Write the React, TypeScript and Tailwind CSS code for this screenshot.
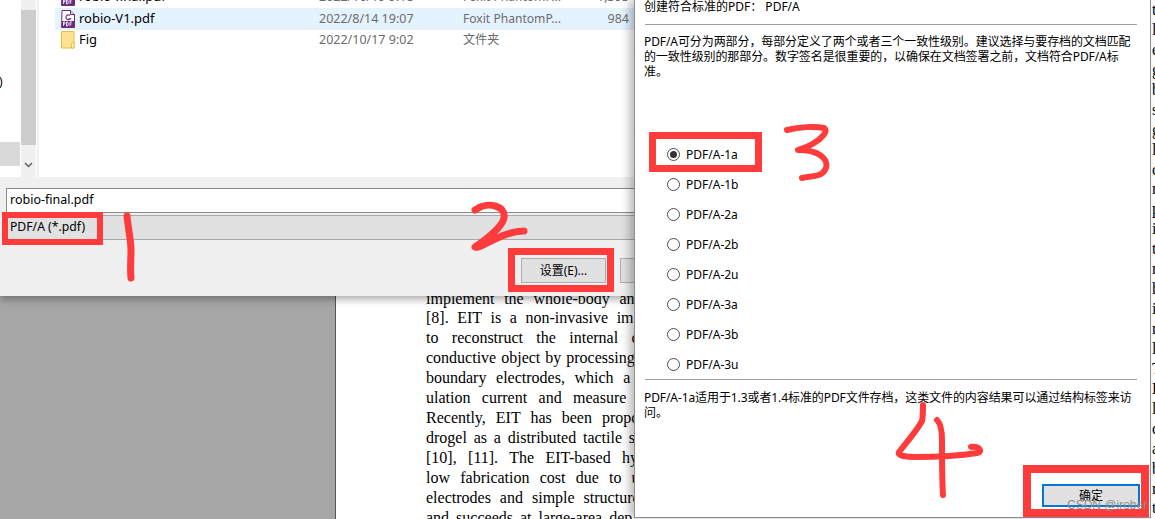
const uiFont = "font-['Noto_Sans','Noto_Sans_CJK_SC',sans-serif]";

const pageLines = [
  { text: "implement the whole-body an", spacing: "[word-spacing:5.7px]" },
  { text: "[8]. EIT is a non-invasive im", spacing: "[word-spacing:4.6px]" },
  { text: "to reconstruct the internal co", spacing: "[word-spacing:9.4px]" },
  { text: "conductive object by processing", spacing: "[word-spacing:1px]" },
  { text: "boundary electrodes, which a", spacing: "[word-spacing:5.6px]" },
  { text: "ulation current and measure", spacing: "[word-spacing:7.4px]" },
  { text: "Recently, EIT has been propo", spacing: "[word-spacing:6px]" },
  { text: "drogel as a distributed tactile s", spacing: "[word-spacing:2.8px]" },
  { text: "[10], [11]. The EIT-based hy", spacing: "[word-spacing:7.4px]" },
  { text: "low fabrication cost due to us", spacing: "[word-spacing:6.2px]" },
  { text: "electrodes and simple structure", spacing: "[word-spacing:5px]" },
  { text: "and succeeds at large-area dep", spacing: "[word-spacing:3px]" },
];

const edgeLetters = ["t", "l", "e", "g", "b", "s", "g", "l", "c", "n", "p", "i", "t", "n", "h", "i", "n", "l", "T", "E", "l", "o", "a", "b", "r", "t"];

const radios = ["PDF/A-1a", "PDF/A-1b", "PDF/A-2a", "PDF/A-2b", "PDF/A-2u", "PDF/A-3a", "PDF/A-3b", "PDF/A-3u"];

function PdfIcon() {
  return (
    <svg width="14" height="18" viewBox="0 0 14 18" className="shrink-0">
      <path d="M1 .5h8.500l4 4v13h-13z" fill="#fff" stroke="#6b2c7f" />
      <path d="M9.500 .5v4h4" fill="#e9dcef" stroke="#6b2c7f" />
      <path d="M9 5.500a2.400 2.400 0 1 0 .4 3H7.400" fill="none" stroke="#7a3d8f" strokeWidth="1.200" />
      <rect x="1" y="11" width="12" height="6" fill="#6b2c7f" />
      <path d="M2.500 16v-4h1.400v2H2.500M5.500 12v4h1.200l.6-2-.6-2zM9 16v-4h2M9 14h1.500" fill="none" stroke="#fff" strokeWidth=".8" />
    </svg>
  );
}

function FolderIcon() {
  return (
    <svg width="14" height="18" viewBox="0 0 14 18" className="shrink-0">
      <path d="M.5 .5h12.500v16.500h-12.500z" fill="#ffe28f" stroke="#e9bd45" />
      <path d="M10.500 17v-5l2.500-1v6z" fill="#fff2c4" stroke="#e9bd45" />
    </svg>
  );
}

function FileRow({ icon, name, date, type, size, selected, short }: { icon: React.ReactNode; name: string; date: string; type: string; size?: string; selected?: boolean; short?: boolean }) {
  return (
    <div className={`grid ${short ? "h-[20px]" : "h-[22px]"} grid-cols-[18px_240px_144px_120px_1fr] items-center pl-[6px] pr-[7px] text-[12.5px] ${selected ? "bg-[#e5f3ff]" : ""}`}>
      {icon}
      <span className="text-[13px] text-black">{name}</span>
      <span className="text-[#6d6d6d]">{date}</span>
      <span className="text-[12.1px] text-[#6d6d6d]">{type}</span>
      <span className="text-right text-[#6d6d6d]">{size}</span>
    </div>
  );
}

function SaveDialog() {
  return (
    <div className="absolute left-0 top-0 flex h-[296px] w-[636px] flex-col bg-[#f0f0f0] shadow-[0_3px_8px_rgba(0,0,0,0.35)]">
      <div className="flex h-[177px] bg-white">
        <div className="relative w-[21px] overflow-hidden">
          <span className="absolute left-[-1px] top-[73px] text-[12px] text-black">)</span>
          <div className="absolute left-0 top-[142px] h-[24px] w-[20px] bg-[#d9d9d9]" />
        </div>
        <div className="flex w-[15px] flex-col bg-[#f0f0f0]">
          <div className="mt-[10px] h-[135px] bg-[#cdcdcd]" />
          <div className="mt-[17px] flex justify-center">
            <svg width="9" height="6" viewBox="0 0 9 6">
              <path d="M1 1l3.500 3.500L8 1" fill="none" stroke="#606060" strokeWidth="1.500" />
            </svg>
          </div>
        </div>
        <div className="ml-[1px] w-[2px] bg-[#f0f0f0]" />
        <div className="ml-[16px] flex-1 overflow-hidden">
          <div className="mt-[-14px]">
            <FileRow icon={<PdfIcon />} name="robio-final.pdf" date="2022/10/19 9:18" type="Foxit PhantomP..." size="1,393" />
            <FileRow icon={<PdfIcon />} name="robio-V1.pdf" date="2022/8/14 19:07" type="Foxit PhantomP..." size="984" selected />
            <FileRow icon={<FolderIcon />} name="Fig" date="2022/10/17 9:02" type="文件夹" short />
          </div>
        </div>
      </div>
      <div className="ml-[6px] mt-[11px] flex h-[25px] items-center border border-[#8a8a8a] bg-white pl-[3px] text-[12.5px] text-black">
        robio-final.pdf
      </div>
      <div className="ml-[6px] mt-[2px] flex h-[25px] items-center border border-[#a8a8a8] bg-[#e1e1e1] pl-[3px] text-[12.2px] text-black">
        PDF/A (*.pdf)
      </div>
      <div className="mt-[18px] flex gap-[14px] pl-[521px]">
        <div className="flex h-[25px] w-[85px] items-center justify-center border border-[#adadad] bg-[#e1e1e1] text-[12px] text-black">
          设置(E)...
        </div>
        <div className="h-[25px] flex-1 border border-[#adadad] bg-[#e1e1e1]" />
      </div>
    </div>
  );
}

function StandardDialog() {
  return (
    <div className="absolute left-[634px] top-0 flex h-[518px] w-[517px] flex-col border-b border-l border-r border-[#8c8c8c] bg-white px-[10px] text-[12px] leading-[15px] text-black shadow-[-5px_0_8px_rgba(0,0,0,0.25)]">
      <div className="ml-[-1px] mt-[-1px] pb-[10px]">创建符合标准的PDF： PDF/A</div>
      <div className="h-px w-[492px] bg-[#a0a0a0]" />
      <p className="ml-[-1px] mt-[9px] w-[496px] tracking-[-0.09px]">
        PDF/A可分为两部分，每部分定义了两个或者三个一致性级别。建议选择与要存档的文档匹配
        <br />
        的一致性级别的那部分。数字签名是很重要的，以确保在文档签署之前，文档符合PDF/A标
        <br />
        准。
      </p>
      <div className="mt-[68px] flex flex-col gap-[15px] pl-[22px]">
        {radios.map((label, i) => (
          <div key={label} className="flex h-[15px] items-center gap-[6px]">
            <span className="flex h-[13px] w-[13px] items-center justify-center rounded-full border border-[#4d4d4d] bg-white">
              {i === 0 && <span className="h-[7px] w-[7px] rounded-full bg-[#333333]" />}
            </span>
            <span>{label}</span>
          </div>
        ))}
      </div>
      <div className="mt-[7px] h-px w-[492px] bg-[#a0a0a0]" />
      <p className="ml-[-1px] mt-[10px] w-[496px] tracking-[-0.09px]">
        PDF/A-1a适用于1.3或者1.4标准的PDF文件存档，这类文件的内容结果可以通过结构标签来访
        <br />
        问。
      </p>
      <div className="mt-[64px] flex h-[23px] w-[98px] items-center justify-center self-end border-2 border-[#0078d7] bg-[#e1e1e1]">
        确定
      </div>
    </div>
  );
}

function Annotations() {
  return (
    <>
      <div className="absolute left-[2px] top-[212px] h-[33px] w-[101px] border-[6px] border-[#ff3b3b]" />
      <div className="absolute left-[508px] top-[248px] h-[44px] w-[106px] border-[7px] border-[#ff3b3b]" />
      <div className="absolute left-[649px] top-[132px] h-[40px] w-[113px] border-[7px] border-[#ff3b3b]" />
      <div className="absolute left-[1023px] top-[465px] h-[52px] w-[126px] border-[8px] border-[#ff3b3b]" />
      <svg width="1155" height="519" viewBox="0 0 1155 519" className="pointer-events-none absolute left-0 top-0">
        <g fill="none" stroke="#ff3b3b" strokeLinecap="round" strokeLinejoin="round">
          <path d="M127 216c1 12 4 24 4 34 0 10-1 20 0 28" strokeWidth="7" />
          <path d="M475 210c6-4 14-6 20-4 8 2 11 8 8 15-5 10-18 19-28 26 4 1 10-3 18-7 10-5 22-9 31-9" strokeWidth="7" />
          <path d="M787 130c12-3 28-4 37-2 5 3-3 11-10 15-6 4-13 6-16 7 6 0 16 1 22 5 6 4 8 10 5 15-4 7-14 6-23 8" strokeWidth="6" />
          <path d="M923 405c0 6 0 12-1 16-6 11-17 23-23 31-2 4 8 5 16 5 19 0 43-1 62-4 6-1 3-7-6-6" strokeWidth="6" />
          <path d="M937 420c4 4 5 10 5 20 0 20 0 40 1 55" strokeWidth="6" />
        </g>
      </svg>
      <span className="absolute left-[1067px] top-[498px] font-['Liberation_Sans',sans-serif] text-[12px] leading-[14px] text-[#8f8f8f]">
        CSDN @irober
      </span>
    </>
  );
}

export default function App() {
  return (
    <div className={`relative flex h-[519px] w-[1155px] overflow-hidden bg-white ${uiFont}`}>
      <div className="h-full w-[336px] shrink-0 border-r border-[#555555] bg-[#a6a6a6]" />
      <div className="flex h-full flex-1 font-['Liberation_Serif',serif] text-[16px] leading-[19.95px] text-black">
        <div className="ml-[90px] w-[725px] overflow-hidden whitespace-nowrap pt-[288.5px]">
          {pageLines.map((line) => (
            <div key={line.text} className={line.spacing}>
              {line.text}
            </div>
          ))}
        </div>
        <div className="ml-[1px] flex flex-col overflow-hidden">
          {edgeLetters.map((letter, i) => (
            <span key={i} className="h-[19.95px]">
              {letter}
            </span>
          ))}
        </div>
      </div>
      <SaveDialog />
      <StandardDialog />
      <Annotations />
    </div>
  );
}
